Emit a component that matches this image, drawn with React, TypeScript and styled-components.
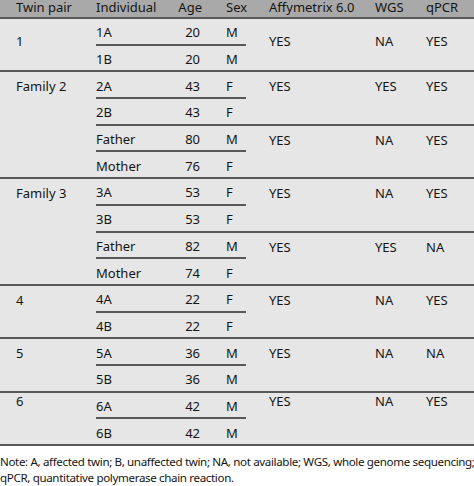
import styled, { createGlobalStyle } from 'styled-components';

const GlobalStyle = createGlobalStyle`
  body {
    margin: 0;
    background: #ffffff;
    font-family: "Noto Sans", "DejaVu Sans", sans-serif;
    color: #151515;
  }
`;

const LINE = '2px solid #585858';

const Page = styled.div`
  width: 474px;
  overflow: hidden;
`;

const Table = styled.div`
  background: #e6e6e6;
  border-bottom: ${LINE};
  font-size: 13px;
`;

const HeaderRow = styled.div`
  display: flex;
  height: 17px;
  background: #a9a9a9;
  border-bottom: ${LINE};
  line-height: 15px;
`;

const HeadCell = styled.div<{ $w: number; $pl?: number; $right?: boolean }>`
  width: ${(p) => p.$w}px;
  padding-left: ${(p) => p.$pl ?? 0}px;
  box-sizing: border-box;
  text-align: ${(p) => (p.$right ? 'right' : 'left')};
  white-space: nowrap;
`;

const Group = styled.div<{ $first?: boolean }>`
  display: flex;
  border-top: ${(p) => (p.$first ? 'none' : LINE)};
`;

const TwinCell = styled.div<{ $shift: number }>`
  width: 96px;
  flex: none;
  box-sizing: border-box;
  padding-left: 16px;
  padding-top: ${(p) => 6 + p.$shift}px;
  line-height: 17px;
`;

const SubGroups = styled.div`
  flex: 1;
  display: flex;
  flex-direction: column;
`;

const SubGroup = styled.div<{ $first?: boolean }>`
  display: flex;
  border-top: ${(p) => (p.$first ? 'none' : LINE)};
`;

const People = styled.div`
  width: 150px;
  flex: none;
  display: flex;
  flex-direction: column;
`;

const PersonRow = styled.div<{ $first?: boolean }>`
  display: flex;
  align-items: center;
  height: 22.7px;
  padding-top: 2px;
  border-top: ${(p) => (p.$first ? 'none' : LINE)};
`;

const Name = styled.div`
  width: 70px;
`;

const Age = styled.div`
  width: 34px;
  text-align: right;
`;

const Sex = styled.div`
  padding-left: 26px;
`;

const Result = styled.div<{ $w: number; $pl?: number; $shift: number }>`
  width: ${(p) => p.$w}px;
  flex: none;
  box-sizing: border-box;
  padding-left: ${(p) => p.$pl ?? 0}px;
  padding-top: ${(p) => 6 + p.$shift}px;
  line-height: 17px;
`;

const Note = styled.div`
  padding-top: 8px;
  font-size: 11.6px;
  line-height: 16px;
  letter-spacing: -0.36px;
  white-space: nowrap;
`;

type Person = { id: string; age: number; sex: string };
type Sub = { people: Person[]; affy: string; wgs: string; qpcr: string };
type GroupData = { label: string; shift: number; subs: Sub[] };

const data: GroupData[] = [
  {
    label: '1',
    shift: 8,
    subs: [
      { people: [{ id: '1A', age: 20, sex: 'M' }, { id: '1B', age: 20, sex: 'M' }], affy: 'YES', wgs: 'NA', qpcr: 'YES' },
    ],
  },
  {
    label: 'Family 2',
    shift: 0,
    subs: [
      { people: [{ id: '2A', age: 43, sex: 'F' }, { id: '2B', age: 43, sex: 'F' }], affy: 'YES', wgs: 'YES', qpcr: 'YES' },
      { people: [{ id: 'Father', age: 80, sex: 'M' }, { id: 'Mother', age: 76, sex: 'F' }], affy: 'YES', wgs: 'NA', qpcr: 'YES' },
    ],
  },
  {
    label: 'Family 3',
    shift: 0,
    subs: [
      { people: [{ id: '3A', age: 53, sex: 'F' }, { id: '3B', age: 53, sex: 'F' }], affy: 'YES', wgs: 'NA', qpcr: 'YES' },
      { people: [{ id: 'Father', age: 82, sex: 'M' }, { id: 'Mother', age: 74, sex: 'F' }], affy: 'YES', wgs: 'YES', qpcr: 'NA' },
    ],
  },
  {
    label: '4',
    shift: 0,
    subs: [
      { people: [{ id: '4A', age: 22, sex: 'F' }, { id: '4B', age: 22, sex: 'F' }], affy: 'YES', wgs: 'NA', qpcr: 'YES' },
    ],
  },
  {
    label: '5',
    shift: 0,
    subs: [
      { people: [{ id: '5A', age: 36, sex: 'M' }, { id: '5B', age: 36, sex: 'M' }], affy: 'YES', wgs: 'NA', qpcr: 'NA' },
    ],
  },
  {
    label: '6',
    shift: -7,
    subs: [
      { people: [{ id: '6A', age: 42, sex: 'M' }, { id: '6B', age: 42, sex: 'M' }], affy: 'YES', wgs: 'NA', qpcr: 'YES' },
    ],
  },
];

export default function App() {
  return (
    <Page>
      <GlobalStyle />
      <Table>
        <HeaderRow>
          <HeadCell $w={96} $pl={16}>Twin pair</HeadCell>
          <HeadCell $w={70}>Individual</HeadCell>
          <HeadCell $w={36} $right>Age</HeadCell>
          <HeadCell $w={44} $pl={24}>Sex</HeadCell>
          <HeadCell $w={129} $pl={23}>Affymetrix 6.0</HeadCell>
          <HeadCell $w={51}>WGS</HeadCell>
          <HeadCell $w={48}>qPCR</HeadCell>
        </HeaderRow>
        {data.map((g, gi) => (
          <Group key={gi} $first={gi === 0}>
            <TwinCell $shift={g.shift}>{g.label}</TwinCell>
            <SubGroups>
              {g.subs.map((s, si) => (
                <SubGroup key={si} $first={si === 0}>
                  <People>
                    {s.people.map((p, pi) => (
                      <PersonRow key={pi} $first={pi === 0}>
                        <Name>{p.id}</Name>
                        <Age>{p.age}</Age>
                        <Sex>{p.sex}</Sex>
                      </PersonRow>
                    ))}
                  </People>
                  <Result $w={129} $pl={23} $shift={g.shift}>{s.affy}</Result>
                  <Result $w={51} $shift={g.shift}>{s.wgs}</Result>
                  <Result $w={48} $shift={g.shift}>{s.qpcr}</Result>
                </SubGroup>
              ))}
            </SubGroups>
          </Group>
        ))}
      </Table>
      <Note>
        Note: A, affected twin; B, unaffected twin; NA, not available; WGS, whole genome sequencing;
        <br />
        qPCR, quantitative polymerase chain reaction.
      </Note>
    </Page>
  );
}
